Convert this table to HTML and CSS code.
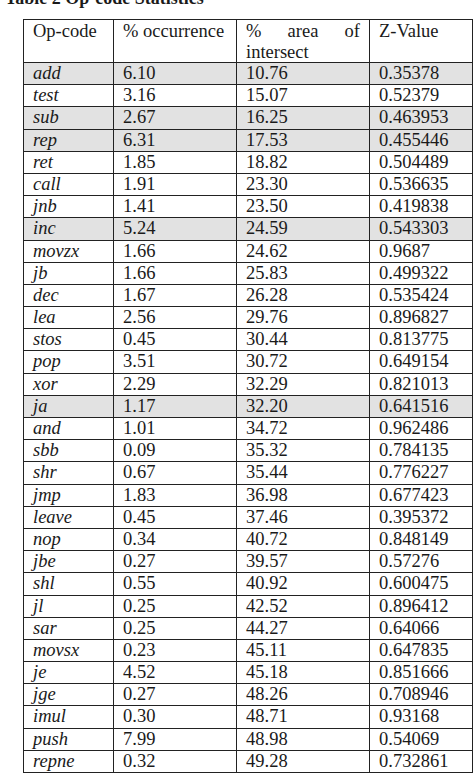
FILE: index.html
```html
<!DOCTYPE html>
<html>
<head>
<meta charset="utf-8">
<link rel="stylesheet" href="styles.css">
</head>
<body>
<div class="caption">Table 2 Op-code Statistics</div>
<div class="stats">
<div class="row head"><div class="cell">Op-code</div><div class="cell">% occurrence</div><div class="cell just">% area of intersect</div><div class="cell">Z-Value</div></div>
<div class="row hl"><div class="cell op">add</div><div class="cell">6.10</div><div class="cell">10.76</div><div class="cell">0.35378</div></div>
<div class="row"><div class="cell op">test</div><div class="cell">3.16</div><div class="cell">15.07</div><div class="cell">0.52379</div></div>
<div class="row hl"><div class="cell op">sub</div><div class="cell">2.67</div><div class="cell">16.25</div><div class="cell">0.463953</div></div>
<div class="row hl"><div class="cell op">rep</div><div class="cell">6.31</div><div class="cell">17.53</div><div class="cell">0.455446</div></div>
<div class="row"><div class="cell op">ret</div><div class="cell">1.85</div><div class="cell">18.82</div><div class="cell">0.504489</div></div>
<div class="row"><div class="cell op">call</div><div class="cell">1.91</div><div class="cell">23.30</div><div class="cell">0.536635</div></div>
<div class="row"><div class="cell op">jnb</div><div class="cell">1.41</div><div class="cell">23.50</div><div class="cell">0.419838</div></div>
<div class="row hl"><div class="cell op">inc</div><div class="cell">5.24</div><div class="cell">24.59</div><div class="cell">0.543303</div></div>
<div class="row"><div class="cell op">movzx</div><div class="cell">1.66</div><div class="cell">24.62</div><div class="cell">0.9687</div></div>
<div class="row"><div class="cell op">jb</div><div class="cell">1.66</div><div class="cell">25.83</div><div class="cell">0.499322</div></div>
<div class="row"><div class="cell op">dec</div><div class="cell">1.67</div><div class="cell">26.28</div><div class="cell">0.535424</div></div>
<div class="row"><div class="cell op">lea</div><div class="cell">2.56</div><div class="cell">29.76</div><div class="cell">0.896827</div></div>
<div class="row"><div class="cell op">stos</div><div class="cell">0.45</div><div class="cell">30.44</div><div class="cell">0.813775</div></div>
<div class="row"><div class="cell op">pop</div><div class="cell">3.51</div><div class="cell">30.72</div><div class="cell">0.649154</div></div>
<div class="row"><div class="cell op">xor</div><div class="cell">2.29</div><div class="cell">32.29</div><div class="cell">0.821013</div></div>
<div class="row hl"><div class="cell op">ja</div><div class="cell">1.17</div><div class="cell">32.20</div><div class="cell">0.641516</div></div>
<div class="row"><div class="cell op">and</div><div class="cell">1.01</div><div class="cell">34.72</div><div class="cell">0.962486</div></div>
<div class="row"><div class="cell op">sbb</div><div class="cell">0.09</div><div class="cell">35.32</div><div class="cell">0.784135</div></div>
<div class="row"><div class="cell op">shr</div><div class="cell">0.67</div><div class="cell">35.44</div><div class="cell">0.776227</div></div>
<div class="row"><div class="cell op">jmp</div><div class="cell">1.83</div><div class="cell">36.98</div><div class="cell">0.677423</div></div>
<div class="row"><div class="cell op">leave</div><div class="cell">0.45</div><div class="cell">37.46</div><div class="cell">0.395372</div></div>
<div class="row"><div class="cell op">nop</div><div class="cell">0.34</div><div class="cell">40.72</div><div class="cell">0.848149</div></div>
<div class="row"><div class="cell op">jbe</div><div class="cell">0.27</div><div class="cell">39.57</div><div class="cell">0.57276</div></div>
<div class="row"><div class="cell op">shl</div><div class="cell">0.55</div><div class="cell">40.92</div><div class="cell">0.600475</div></div>
<div class="row"><div class="cell op">jl</div><div class="cell">0.25</div><div class="cell">42.52</div><div class="cell">0.896412</div></div>
<div class="row"><div class="cell op">sar</div><div class="cell">0.25</div><div class="cell">44.27</div><div class="cell">0.64066</div></div>
<div class="row"><div class="cell op">movsx</div><div class="cell">0.23</div><div class="cell">45.11</div><div class="cell">0.647835</div></div>
<div class="row"><div class="cell op">je</div><div class="cell">4.52</div><div class="cell">45.18</div><div class="cell">0.851666</div></div>
<div class="row"><div class="cell op">jge</div><div class="cell">0.27</div><div class="cell">48.26</div><div class="cell">0.708946</div></div>
<div class="row"><div class="cell op">imul</div><div class="cell">0.30</div><div class="cell">48.71</div><div class="cell">0.93168</div></div>
<div class="row"><div class="cell op">push</div><div class="cell">7.99</div><div class="cell">48.98</div><div class="cell">0.54069</div></div>
<div class="row"><div class="cell op">repne</div><div class="cell">0.32</div><div class="cell">49.28</div><div class="cell">0.732861</div></div>
</div>
</body>
</html>
```
FILE: styles.css
```css
html, body {
  margin: 0;
  padding: 0;
  background: #ffffff;
  overflow: hidden;
}
body {
  font-family: "Liberation Serif", "Times New Roman", serif;
  color: #1a1a1a;
}
.caption {
  font-weight: bold;
  font-size: 18px;
  line-height: 18px;
  height: 18px;
  margin: -11px 0 12px 5px;
  white-space: nowrap;
}
.stats {
  display: grid;
  grid-template-columns: 89px 122px 132px 102px;
  grid-template-rows: 42px;
  grid-auto-rows: 21.19px;
  gap: 1px;
  padding: 1px;
  width: 448px;
  margin-left: 23px;
  background: #222222;
  font-size: 18.5px;
  line-height: 20px;
}
.row {
  display: contents;
}
.cell {
  background: #ffffff;
  padding: 0 9px 0 9px;
  white-space: nowrap;
  overflow: hidden;
}
.head .cell {
  padding-top: 1px;
  line-height: 20.5px;
  white-space: normal;
}
.head .just {
  text-align: justify;
}
.op {
  font-style: italic;
}
.hl .cell {
  background: #e2e2e2;
}
```
